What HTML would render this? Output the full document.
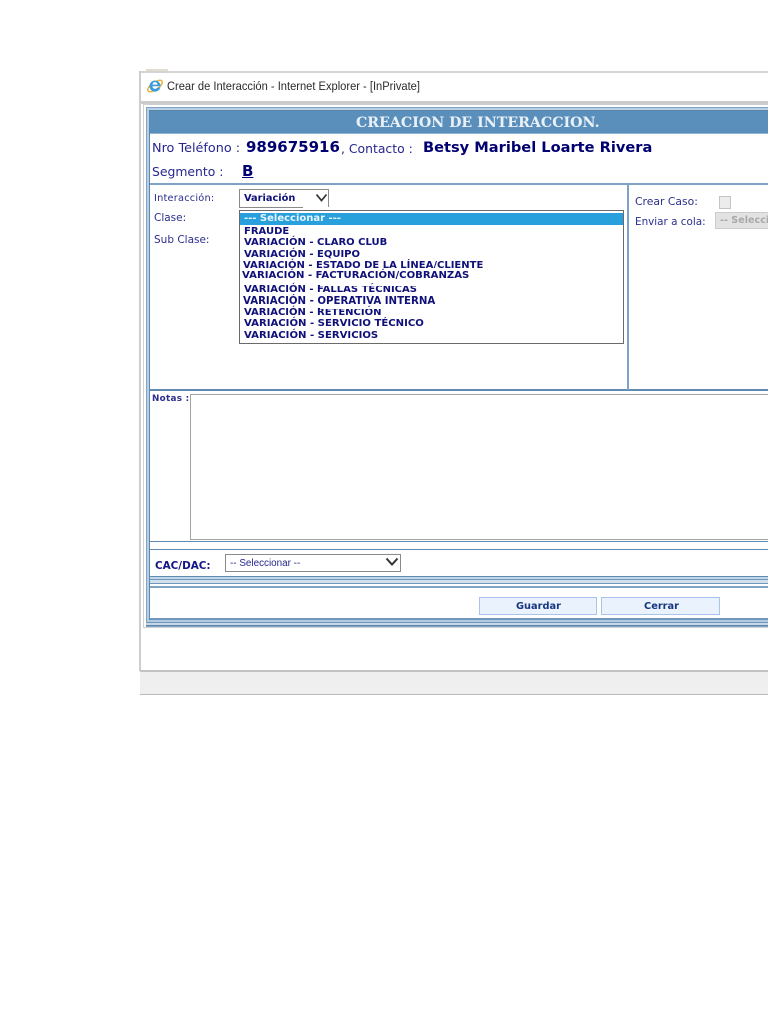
<!DOCTYPE html>
<html lang="es">
<head>
<meta charset="utf-8">
<title>Crear de Interacción</title>
<style>
html,body{margin:0;padding:0;background:#fff;}
#p{position:relative;width:768px;height:1024px;overflow:hidden;background:#fff;font-family:"DejaVu Sans","Liberation Sans",sans-serif;color:#000080;}
.r{position:absolute;}
.t{position:absolute;white-space:nowrap;line-height:1;}
.b{font-weight:bold;}
.l{color:#2b2f8f;font-size:10.8px;}
.o{font-size:10px;font-weight:bold;color:#10107a;left:244px;}
</style>
</head>
<body>
<div id="p">
<!-- window chrome -->
<div class="r" style="left:146px;top:69px;width:22px;height:2px;background:#e2dcd0"></div>
<div class="r" style="left:140px;top:71px;width:628px;height:2px;background:#d4d4d4"></div>
<div class="r" style="left:139px;top:71px;width:2px;height:600px;background:#cdcdcd"></div>
<div class="r" style="left:140px;top:101px;width:628px;height:3px;background:#cbcbcb"></div>
<div class="r" style="left:140px;top:670px;width:628px;height:2px;background:#c2c2c2"></div>
<div class="r" style="left:140px;top:672px;width:628px;height:22px;background:#efefef"></div>
<div class="r" style="left:140px;top:694px;width:628px;height:1px;background:#bbb"></div>

<svg class="r" style="left:146px;top:77px" width="18" height="18" viewBox="0 0 18 18">
<ellipse cx="9" cy="9" rx="8.500" ry="3.600" transform="rotate(-35 9 9)" fill="none" stroke="#e8b53a" stroke-width="1.500"/>
<path d="M9 3.500a5.500 5.500 0 0 1 5.500 5.800H6.400a2.700 2.700 0 0 0 5 1.200h3a5.600 5.600 0 1 1-5.400-7z" fill="#3f9ad8"/>
<path d="M6.500 7.600h5a2.500 2.500 0 0 0-5 0z" fill="#fff"/>
</svg>
<div class="t" style="left:167px;top:80px;font-family:'Liberation Sans',sans-serif;font-size:12.200px;color:#2a2a2a;transform:scaleX(.913);transform-origin:0 0;">Crear de Interacción - Internet Explorer - [InPrivate]</div>

<!-- outer frame -->
<div class="r" style="left:143px;top:104px;width:640px;height:524px;box-sizing:border-box;border:1px solid #cfcfcf;background:#fff"></div>
<div class="r" style="left:146px;top:107px;width:640px;height:520px;background:#7fa4c6"></div>
<div class="r" style="left:147px;top:108px;width:640px;height:516px;background:#b9d0e4"></div>
<div class="r" style="left:149px;top:110px;width:640px;height:510px;background:#5d86ad"></div>
<div class="r" style="left:150px;top:111px;width:640px;height:507px;background:#fff"></div>

<!-- header -->
<div class="r" style="left:150px;top:111px;width:618px;height:23px;background:#5b8fbb;border-bottom:1px solid #8fb4d2;box-sizing:border-box"></div>
<div class="t b" style="left:356px;top:116px;font-family:'DejaVu Serif','Liberation Serif',serif;font-size:14.200px;color:#e9f1f8;">CREACION DE INTERACCION.</div>

<div class="t" style="left:152px;top:143px;font-size:12.800px;color:#26268e;">Nro Teléfono :</div>
<div class="t b" style="left:246px;top:140px;font-size:15px;color:#000070;">989675916</div>
<div class="t" style="left:341px;top:143px;font-size:12.400px;color:#26268e;">, Contacto :</div>
<div class="t b" style="left:423px;top:141px;font-size:14.600px;color:#000070;">Betsy Maribel Loarte Rivera</div>
<div class="t" style="left:152px;top:166px;font-size:12.400px;color:#26268e;">Segmento :</div>
<div class="t b" style="left:242px;top:164px;font-size:15px;color:#000070;text-decoration:underline;">B</div>

<!-- panels -->
<div class="r" style="left:150px;top:183px;width:618px;height:2px;background:#7fa3c4"></div>
<div class="r" style="left:150px;top:389px;width:618px;height:2px;background:#5f8bb2"></div>
<div class="r" style="left:627px;top:184px;width:2px;height:206px;background:#7ea3c4"></div>

<div class="t l" style="left:154px;top:194px;font-size:9.800px;letter-spacing:.2px">Interacción:</div>
<div class="t l" style="left:154px;top:213px;font-size:10.500px">Clase:</div>
<div class="t l" style="left:154px;top:235px;font-size:10.500px">Sub Clase:</div>

<div class="r" style="left:239px;top:189px;width:90px;height:19px;box-sizing:border-box;border:1px solid #8a8a8a;background:#fff"></div>
<div class="r" style="left:303px;top:207px;width:26px;height:1px;background:#fff"></div>
<div class="t b" style="left:244px;top:194px;font-size:9.800px;color:#10107a">Variación</div>
<svg class="r" style="left:315px;top:193px" width="13" height="10" viewBox="0 0 13 10"><path d="M1.500 1.500L6.500 7.500L11.500 1.500" fill="none" stroke="#333" stroke-width="1.700"/></svg>

<!-- dropdown list -->
<div class="r" style="left:239px;top:210px;width:385px;height:134px;box-sizing:border-box;border:1px solid #6a6a6a;background:#fff"></div>
<div class="r" style="left:240px;top:213px;width:383px;height:12px;background:#27a0dc"></div>
<div class="t b" style="left:244px;top:214px;font-size:10px;color:#e8f5fc">--- Seleccionar ---</div>
<div class="t o" style="top:227px">FRAUDE</div>
<div class="t o" style="top:238px">VARIACIÓN - CLARO CLUB</div>
<div class="t o" style="top:250px;clip-path:inset(-4px 0 1px 0)">VARIACIÓN - EQUIPO</div>
<div class="t o" style="left:243px;top:261px;clip-path:inset(-4px 0 3px 0)">VARIACIÓN - ESTADO DE LA LÍNEA/CLIENTE</div>
<div class="t o" style="left:242px;top:271px;font-size:10.100px">VARIACIÓN - FACTURACIÓN/COBRANZAS</div>
<div class="t o" style="top:285px">VARIACIÓN - FALLAS TÉCNICAS</div>
<div class="t o" style="left:243px;top:297px;font-size:10.200px">VARIACIÓN - OPERATIVA INTERNA</div>
<div class="t o" style="top:308px;clip-path:inset(-4px 0 0 0)">VARIACIÓN - RETENCIÓN</div>
<div class="t o" style="top:319px;font-size:10.100px">VARIACIÓN - SERVICIO TÉCNICO</div>
<div class="t o" style="top:331px;font-size:10.100px">VARIACIÓN - SERVICIOS</div>
<!-- row clipping marks -->
<div class="r" style="left:320px;top:285px;width:110px;height:1px;background:#fff"></div>
<div class="r" style="left:320px;top:308px;width:70px;height:1px;background:#fff"></div>

<!-- right panel -->
<div class="t l" style="left:635px;top:197px;">Crear Caso:</div>
<div class="r" style="left:719px;top:196px;width:12px;height:13px;box-sizing:border-box;border:1px solid #c4c4c4;background:#ececec"></div>
<div class="t l" style="left:635px;top:217px;font-size:10.400px">Enviar a cola:</div>
<div class="r" style="left:715px;top:212px;width:60px;height:17px;box-sizing:border-box;border:1px solid #ccc;background:#e2e2e2"></div>
<div class="t b" style="left:720px;top:216px;font-size:9.600px;color:#a8a8a8">-- Seleccionar</div>

<!-- notas -->
<div class="t b" style="left:152px;top:395px;font-size:8.800px;color:#2b2f8f;letter-spacing:.3px">Notas :</div>
<div class="r" style="left:190px;top:394px;width:600px;height:146px;box-sizing:border-box;border:1px solid #a3a3a3;background:#fff"></div>
<div class="r" style="left:150px;top:541px;width:618px;height:1px;background:#5f8bb2"></div>
<div class="r" style="left:150px;top:549px;width:618px;height:1px;background:#5f8bb2"></div>

<!-- CAC -->
<div class="t b" style="left:155px;top:561px;font-size:10.400px;color:#14148a">CAC/DAC:</div>
<div class="r" style="left:225px;top:554px;width:176px;height:18px;box-sizing:border-box;border:1px solid #8a8a8a;background:#fff"></div>
<div class="t" style="left:230px;top:559px;font-family:'Liberation Sans',sans-serif;font-size:9.900px;color:#26268e">-- Seleccionar --</div>
<svg class="r" style="left:385px;top:557px" width="14" height="10" viewBox="0 0 14 10"><path d="M1.500 1.500L7 7.500L12.500 1.500" fill="none" stroke="#333" stroke-width="2"/></svg>

<!-- separators -->
<div class="r" style="left:150px;top:576px;width:618px;height:1px;background:#5f8bb2"></div>
<div class="r" style="left:150px;top:577px;width:618px;height:2px;background:#c4d7e8"></div>
<div class="r" style="left:150px;top:579px;width:618px;height:1px;background:#6f97bb"></div>
<div class="r" style="left:150px;top:580px;width:618px;height:3px;background:#d2e0ec"></div>
<div class="r" style="left:150px;top:583px;width:618px;height:1px;background:#6f97bb"></div>
<div class="r" style="left:150px;top:586px;width:618px;height:2px;background:#7fa3c4"></div>

<!-- buttons -->
<div class="r" style="left:479px;top:597px;width:118px;height:18px;box-sizing:border-box;border:1px solid #a9c4ec;background:#e9f2fd"></div>
<div class="t b" style="left:516px;top:602px;font-size:9.800px;color:#17367f">Guardar</div>
<div class="r" style="left:601px;top:597px;width:119px;height:18px;box-sizing:border-box;border:1px solid #a9c4ec;background:#e9f2fd"></div>
<div class="t b" style="left:644px;top:602px;font-size:9.800px;color:#17367f">Cerrar</div>

<!-- bottom lines -->
<div class="r" style="left:150px;top:618px;width:618px;height:2px;background:#6f97bb"></div>
<div class="r" style="left:147px;top:620px;width:621px;height:2px;background:#b3cbe0"></div>
<div class="r" style="left:147px;top:622px;width:621px;height:1px;background:#6f97bb"></div>
<div class="r" style="left:146px;top:623px;width:622px;height:2px;background:#c6d8e8"></div>
<div class="r" style="left:146px;top:625px;width:622px;height:1px;background:#5d86ad"></div>
<div class="r" style="left:143px;top:627px;width:625px;height:1px;background:#cfcfcf"></div>
</div>
</body>
</html>
